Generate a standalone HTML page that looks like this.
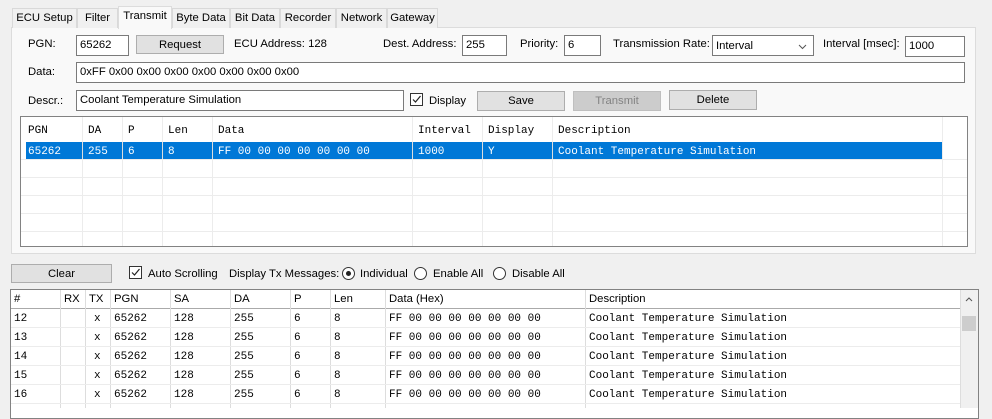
<!DOCTYPE html>
<html><head><style>
*{box-sizing:border-box;margin:0;padding:0}
body{width:992px;height:408px;background:#f0f0f0;font-family:"Liberation Sans",sans-serif;font-size:11.3px;color:#000;position:relative;overflow:hidden}
.a{position:absolute;white-space:nowrap}
.tab{position:absolute;top:8px;height:20px;border:1px solid #d9d9d9;border-bottom:none;background:#f0f0f0;text-align:center;line-height:18px}
.inp{position:absolute;height:21px;background:#fff;border:1px solid #7a7a7a;padding-left:3px;line-height:19px}
.btn{position:absolute;height:20px;background:#e1e1e1;border:1px solid #adadad;text-align:center;line-height:18px}
.mono{font-family:"Liberation Mono",monospace;font-size:11px}
.vl{position:absolute;width:1px;background:#ececec}
.hl{position:absolute;height:1px;background:#ececec}
.chk{position:absolute;width:13px;height:13px;border:1px solid #333;background:#fff}
.rad{position:absolute;width:13px;height:13px;border:1px solid #333;border-radius:50%;background:#fff}
</style></head><body>
<div class="a" style="left:11px;top:27px;width:965px;height:227px;background:#f9f9f9;border:1px solid #dcdcdc"></div>
<div class="tab" style="left:12px;width:65px">ECU Setup</div>
<div class="tab" style="left:77px;width:41px">Filter</div>
<div class="tab" style="left:118px;top:6px;height:23px;width:54px;background:#f9f9f9;border-color:#dcdcdc">Transmit</div>
<div class="tab" style="left:172px;width:58px">Byte Data</div>
<div class="tab" style="left:230px;width:50px">Bit Data</div>
<div class="tab" style="left:280px;width:56px">Recorder</div>
<div class="tab" style="left:336px;width:51px">Network</div>
<div class="tab" style="left:387px;width:51px">Gateway</div>

<div class="a" style="left:28px;top:38px">PGN:</div>
<div class="inp" style="left:76px;top:35px;width:53px">65262</div>
<div class="btn" style="left:136px;top:35px;width:88px;height:19px">Request</div>
<div class="a" style="left:234px;top:38px">ECU Address: 128</div>
<div class="a" style="left:383px;top:38px">Dest. Address:</div>
<div class="inp" style="left:462px;top:35px;width:45px">255</div>
<div class="a" style="left:520px;top:38px">Priority:</div>
<div class="inp" style="left:564px;top:35px;width:37px">6</div>
<div class="a" style="left:613px;top:38px">Transmission Rate:</div>
<div class="inp" style="left:712px;top:35px;width:102px;padding-top:1px">Interval<svg width="9" height="6" style="position:absolute;right:6px;top:8px"><path d="M1 1 L4.5 4.5 L8 1" stroke="#555" fill="none"/></svg></div>
<div class="a" style="left:823px;top:38px">Interval [msec]:</div>
<div class="inp" style="left:905px;top:36px;width:60px">1000</div>

<div class="a" style="left:28px;top:66px">Data:</div>
<div class="inp" style="left:76px;top:62px;width:889px">0xFF 0x00 0x00 0x00 0x00 0x00 0x00 0x00</div>

<div class="a" style="left:28px;top:95px">Descr.:</div>
<div class="inp" style="left:76px;top:90px;width:328px">Coolant Temperature Simulation</div>
<div class="chk" style="left:410px;top:93px"><svg width="11" height="11" style="position:absolute;left:0;top:0"><path d="M2 5.5 L4.5 8 L9.5 2" stroke="#222" stroke-width="1.2" fill="none"/></svg></div>
<div class="a" style="left:429px;top:95px">Display</div>
<div class="btn" style="left:477px;top:91px;width:88px">Save</div>
<div class="btn" style="left:573px;top:91px;width:88px;background:#cccccc;border-color:#bfbfbf;color:#838383">Transmit</div>
<div class="btn" style="left:669px;top:90px;width:88px">Delete</div>

<div class="a" style="left:20px;top:116px;width:948px;height:131px;background:#fff;border:1px solid #828282"></div>
<div class="vl" style="left:82px;top:117px;height:129px"></div>
<div class="vl" style="left:122px;top:117px;height:129px"></div>
<div class="vl" style="left:162px;top:117px;height:129px"></div>
<div class="vl" style="left:212px;top:117px;height:129px"></div>
<div class="vl" style="left:412px;top:117px;height:129px"></div>
<div class="vl" style="left:482px;top:117px;height:129px"></div>
<div class="vl" style="left:552px;top:117px;height:129px"></div>
<div class="vl" style="left:942px;top:117px;height:129px"></div>
<div class="hl" style="left:21px;top:159px;width:946px"></div>
<div class="hl" style="left:21px;top:177px;width:946px"></div>
<div class="hl" style="left:21px;top:195px;width:946px"></div>
<div class="hl" style="left:21px;top:213px;width:946px"></div>
<div class="hl" style="left:21px;top:231px;width:946px"></div>
<div class="a mono" style="left:28px;top:125px">PGN</div>
<div class="a mono" style="left:88px;top:125px">DA</div>
<div class="a mono" style="left:128px;top:125px">P</div>
<div class="a mono" style="left:168px;top:125px">Len</div>
<div class="a mono" style="left:218px;top:125px">Data</div>
<div class="a mono" style="left:418px;top:125px">Interval</div>
<div class="a mono" style="left:488px;top:125px">Display</div>
<div class="a mono" style="left:558px;top:125px">Description</div>
<div class="a" style="left:26px;top:142px;width:916px;height:17px;background:#0078d7"></div>
<div class="vl" style="left:82px;top:142px;height:17px;background:#ddd"></div>
<div class="vl" style="left:122px;top:142px;height:17px;background:#ddd"></div>
<div class="vl" style="left:162px;top:142px;height:17px;background:#ddd"></div>
<div class="vl" style="left:212px;top:142px;height:17px;background:#ddd"></div>
<div class="vl" style="left:412px;top:142px;height:17px;background:#ddd"></div>
<div class="vl" style="left:482px;top:142px;height:17px;background:#ddd"></div>
<div class="vl" style="left:552px;top:142px;height:17px;background:#ddd"></div>
<div class="a mono" style="left:28px;top:146px;color:#fff">65262</div>
<div class="a mono" style="left:88px;top:146px;color:#fff">255</div>
<div class="a mono" style="left:128px;top:146px;color:#fff">6</div>
<div class="a mono" style="left:168px;top:146px;color:#fff">8</div>
<div class="a mono" style="left:218px;top:146px;color:#fff">FF 00 00 00 00 00 00 00</div>
<div class="a mono" style="left:418px;top:146px;color:#fff">1000</div>
<div class="a mono" style="left:488px;top:146px;color:#fff">Y</div>
<div class="a mono" style="left:558px;top:146px;color:#fff">Coolant Temperature Simulation</div>

<div class="btn" style="left:11px;top:264px;width:101px;height:19px">Clear</div>
<div class="chk" style="left:129px;top:266px"><svg width="11" height="11" style="position:absolute;left:0;top:0"><path d="M2 5.5 L4.5 8 L9.5 2" stroke="#222" stroke-width="1.2" fill="none"/></svg></div>
<div class="a" style="left:148px;top:268px">Auto Scrolling</div>
<div class="a" style="left:229px;top:268px">Display Tx Messages:</div>
<div class="rad" style="left:342px;top:267px"><div style="position:absolute;left:3px;top:3px;width:5px;height:5px;border-radius:50%;background:#222"></div></div>
<div class="a" style="left:360px;top:268px">Individual</div>
<div class="rad" style="left:414px;top:267px"></div>
<div class="a" style="left:433px;top:268px">Enable All</div>
<div class="rad" style="left:493px;top:267px"></div>
<div class="a" style="left:512px;top:268px">Disable All</div>

<div class="a" style="left:10px;top:289px;width:969px;height:130px;background:#fff;border:1px solid #828282"></div>
<div class="a" style="left:11px;top:290px;width:949px;height:19px;background:#fff;border-bottom:1px solid #aaa"></div>
<div class="a" style="left:960px;top:290px;width:18px;height:118px;background:#f0f0f0"></div>
<div class="a" style="left:962px;top:316px;width:14px;height:15px;background:#cdcdcd"></div>
<svg class="a" style="left:965px;top:296px" width="8" height="6"><path d="M1 5 L4 2 L7 5" stroke="#555" fill="none"/></svg>
<div class="vl" style="left:60px;top:290px;height:118px;background:#ddd"></div>
<div class="vl" style="left:85px;top:290px;height:118px;background:#ddd"></div>
<div class="vl" style="left:110px;top:290px;height:118px;background:#ddd"></div>
<div class="vl" style="left:170px;top:290px;height:118px;background:#ddd"></div>
<div class="vl" style="left:230px;top:290px;height:118px;background:#ddd"></div>
<div class="vl" style="left:290px;top:290px;height:118px;background:#ddd"></div>
<div class="vl" style="left:330px;top:290px;height:118px;background:#ddd"></div>
<div class="vl" style="left:385px;top:290px;height:118px;background:#ddd"></div>
<div class="vl" style="left:585px;top:290px;height:118px;background:#ddd"></div>
<div class="vl" style="left:960px;top:290px;height:118px;background:#ddd"></div>
<div class="a" style="left:14px;top:293px">#</div>
<div class="a" style="left:64px;top:293px">RX</div>
<div class="a" style="left:89px;top:293px">TX</div>
<div class="a" style="left:114px;top:293px">PGN</div>
<div class="a" style="left:174px;top:293px">SA</div>
<div class="a" style="left:234px;top:293px">DA</div>
<div class="a" style="left:294px;top:293px">P</div>
<div class="a" style="left:334px;top:293px">Len</div>
<div class="a" style="left:389px;top:293px">Data (Hex)</div>
<div class="a" style="left:589px;top:293px">Description</div>

<div class="hl" style="left:11px;top:327px;width:949px"></div>
<div class="hl" style="left:11px;top:346px;width:949px"></div>
<div class="hl" style="left:11px;top:365px;width:949px"></div>
<div class="hl" style="left:11px;top:384px;width:949px"></div>
<div class="hl" style="left:11px;top:403px;width:949px"></div>

<div class="a mono" style="left:14px;top:313px">12</div><div class="a mono" style="left:94px;top:313px">x</div><div class="a mono" style="left:114px;top:313px">65262</div><div class="a mono" style="left:174px;top:313px">128</div><div class="a mono" style="left:234px;top:313px">255</div><div class="a mono" style="left:294px;top:313px">6</div><div class="a mono" style="left:334px;top:313px">8</div><div class="a mono" style="left:389px;top:313px">FF 00 00 00 00 00 00 00</div><div class="a mono" style="left:589px;top:313px">Coolant Temperature Simulation</div>
<div class="a mono" style="left:14px;top:332px">13</div><div class="a mono" style="left:94px;top:332px">x</div><div class="a mono" style="left:114px;top:332px">65262</div><div class="a mono" style="left:174px;top:332px">128</div><div class="a mono" style="left:234px;top:332px">255</div><div class="a mono" style="left:294px;top:332px">6</div><div class="a mono" style="left:334px;top:332px">8</div><div class="a mono" style="left:389px;top:332px">FF 00 00 00 00 00 00 00</div><div class="a mono" style="left:589px;top:332px">Coolant Temperature Simulation</div>
<div class="a mono" style="left:14px;top:351px">14</div><div class="a mono" style="left:94px;top:351px">x</div><div class="a mono" style="left:114px;top:351px">65262</div><div class="a mono" style="left:174px;top:351px">128</div><div class="a mono" style="left:234px;top:351px">255</div><div class="a mono" style="left:294px;top:351px">6</div><div class="a mono" style="left:334px;top:351px">8</div><div class="a mono" style="left:389px;top:351px">FF 00 00 00 00 00 00 00</div><div class="a mono" style="left:589px;top:351px">Coolant Temperature Simulation</div>
<div class="a mono" style="left:14px;top:370px">15</div><div class="a mono" style="left:94px;top:370px">x</div><div class="a mono" style="left:114px;top:370px">65262</div><div class="a mono" style="left:174px;top:370px">128</div><div class="a mono" style="left:234px;top:370px">255</div><div class="a mono" style="left:294px;top:370px">6</div><div class="a mono" style="left:334px;top:370px">8</div><div class="a mono" style="left:389px;top:370px">FF 00 00 00 00 00 00 00</div><div class="a mono" style="left:589px;top:370px">Coolant Temperature Simulation</div>
<div class="a mono" style="left:14px;top:389px">16</div><div class="a mono" style="left:94px;top:389px">x</div><div class="a mono" style="left:114px;top:389px">65262</div><div class="a mono" style="left:174px;top:389px">128</div><div class="a mono" style="left:234px;top:389px">255</div><div class="a mono" style="left:294px;top:389px">6</div><div class="a mono" style="left:334px;top:389px">8</div><div class="a mono" style="left:389px;top:389px">FF 00 00 00 00 00 00 00</div><div class="a mono" style="left:589px;top:389px">Coolant Temperature Simulation</div>
</body></html>
